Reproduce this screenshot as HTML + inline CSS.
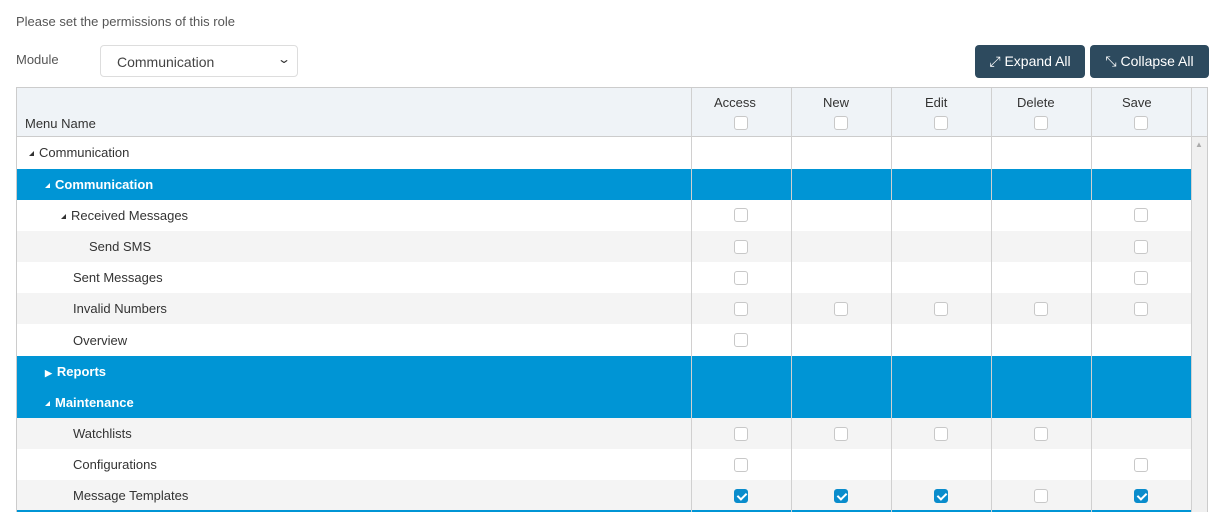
<!DOCTYPE html><html><head><style>
body{margin:0;width:1214px;height:513px;overflow:hidden;background:#fff;font-family:"Liberation Sans",sans-serif;font-size:13px;color:#333;position:relative}
.a{position:absolute}
.row{position:absolute;left:17px;width:1174px;height:31px}
.row span{position:absolute;top:8px}
.cb{position:absolute;width:14px;height:14px;border:1px solid #c8c8c8;border-radius:3px;background:#fff;box-sizing:border-box}
.ck{background:#0a8ccc;border-color:#0a8ccc}
.ck:after{content:"";position:absolute;left:4px;top:1px;width:4px;height:7px;border:solid #fff;border-width:0 2px 2px 0;transform:rotate(45deg)}
.vl{position:absolute;top:88px;width:1px;height:424px;background:#d0d0d0}
.btn{position:absolute;top:45px;height:33px;background:#2d4a5e;color:#fff;border-radius:4px;font-size:14px;line-height:33px;text-align:center}
.tri{display:inline-block;width:0;height:0;border-left:5px solid transparent;border-bottom:5px solid #333;margin-right:5px;vertical-align:1px}
.w .tri{border-bottom-color:#fff}
.w{background:#0095d5;color:#fff}
.g{background:#f4f4f4}
</style></head><body>
<div class="a" style="left:16px;top:14px;color:#555">Please set the permissions of this role</div>
<div class="a" style="left:16px;top:52px;color:#555">Module</div>
<div class="a" style="left:100px;top:45px;width:198px;height:32px;border:1px solid #ddd;border-radius:4px;box-sizing:border-box"><span class="a" style="left:16px;top:8px;font-size:14px;color:#444">Communication</span><span class="a" style="right:8px;top:6px;font-size:12px;transform:scaleX(1.4)">&#8964;</span></div>
<div class="btn" style="left:975px;width:110px">⤢ Expand All</div>
<div class="btn" style="left:1090px;width:119px">⤡ Collapse All</div>
<div class="a" style="left:16px;top:87px;width:1192px;height:425px;border:1px solid #ccc;box-sizing:border-box"></div>
<div class="a" style="left:17px;top:88px;width:1190px;height:48px;background:#eff3f7;border-bottom:1px solid #ccc"></div>
<div class="a" style="left:25px;top:116px">Menu Name</div>
<div class="a" style="left:1191px;top:137px;width:16px;height:375px;background:#f0f0f0"></div>
<div class="a" style="left:1195px;top:140px;font-size:8px;color:#aaa">▲</div>
<div class="row" style="top:137px"><span style="left:12px"><i class="tri"></i>Communication</span></div>
<div class="row w" style="top:169px"><span style="left:28px;font-weight:bold"><i class="tri"></i>Communication</span></div>
<div class="row" style="top:200px"><span style="left:44px"><i class="tri"></i>Received Messages</span></div>
<div class="row g" style="top:231px"><span style="left:72px">Send SMS</span></div>
<div class="row" style="top:262px"><span style="left:56px">Sent Messages</span></div>
<div class="row g" style="top:293px"><span style="left:56px">Invalid Numbers</span></div>
<div class="row" style="top:325px"><span style="left:56px">Overview</span></div>
<div class="row w" style="top:356px"><span style="left:28px;font-weight:bold"><span style="font-size:9px;position:static;margin-right:5px">▶</span>Reports</span></div>
<div class="row w" style="top:387px"><span style="left:28px;font-weight:bold"><i class="tri"></i>Maintenance</span></div>
<div class="row g" style="top:418px"><span style="left:56px">Watchlists</span></div>
<div class="row" style="top:449px"><span style="left:56px">Configurations</span></div>
<div class="row g" style="top:480px;height:31px"><span style="left:56px">Message Templates</span></div>
<div class="a" style="left:17px;top:510px;width:1174px;height:2px;background:#0095d5"></div>
<div class="vl" style="left:691px"></div><div class="vl" style="left:791px"></div><div class="vl" style="left:891px"></div><div class="vl" style="left:991px"></div><div class="vl" style="left:1091px"></div><div class="vl" style="left:1191px"></div>
<div class="a" style="left:714px;top:95px">Access</div><div class="a" style="left:823px;top:95px">New</div><div class="a" style="left:925px;top:95px">Edit</div><div class="a" style="left:1017px;top:95px">Delete</div><div class="a" style="left:1122px;top:95px">Save</div>
<div class="cb" style="left:734px;top:116px"></div><div class="cb" style="left:834px;top:116px"></div><div class="cb" style="left:934px;top:116px"></div><div class="cb" style="left:1034px;top:116px"></div><div class="cb" style="left:1134px;top:116px"></div>
<div class="cb" style="left:734px;top:208px"></div><div class="cb" style="left:1134px;top:208px"></div>
<div class="cb" style="left:734px;top:240px"></div><div class="cb" style="left:1134px;top:240px"></div>
<div class="cb" style="left:734px;top:271px"></div><div class="cb" style="left:1134px;top:271px"></div>
<div class="cb" style="left:734px;top:302px"></div><div class="cb" style="left:834px;top:302px"></div><div class="cb" style="left:934px;top:302px"></div><div class="cb" style="left:1034px;top:302px"></div><div class="cb" style="left:1134px;top:302px"></div>
<div class="cb" style="left:734px;top:333px"></div>
<div class="cb" style="left:734px;top:427px"></div><div class="cb" style="left:834px;top:427px"></div><div class="cb" style="left:934px;top:427px"></div><div class="cb" style="left:1034px;top:427px"></div>
<div class="cb" style="left:734px;top:458px"></div><div class="cb" style="left:1134px;top:458px"></div>
<div class="cb ck" style="left:734px;top:489px"></div><div class="cb ck" style="left:834px;top:489px"></div><div class="cb ck" style="left:934px;top:489px"></div><div class="cb" style="left:1034px;top:489px"></div><div class="cb ck" style="left:1134px;top:489px"></div>
</body></html>
